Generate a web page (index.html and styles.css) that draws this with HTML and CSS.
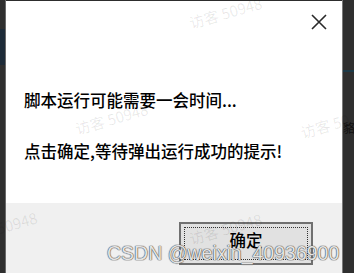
FILE: index.html
```html
<!DOCTYPE html>
<html lang="zh">
<head>
<meta charset="utf-8">
<link rel="stylesheet" href="styles.css">
</head>
<body>
<div class="screen">
  <div class="side side-left">
    <div class="navy-band"></div>
  </div>
  <div class="dialog">
    <div class="content">
      <div class="titlebar">
        <svg class="close" width="16" height="16" viewBox="0 0 16 16">
          <path d="M1 1 L15 15 M15 1 L1 15" stroke="#2a2a2a" stroke-width="1.6" fill="none"/>
        </svg>
      </div>
      <p class="msg msg1">脚本运行可能需要一会时间...</p>
      <p class="msg msg2">点击确定,等待弹出运行成功的提示!</p>
    </div>
    <div class="footer">
      <button class="ok"><span class="focus">确定</span></button>
    </div>
  </div>
  <div class="side side-right">
    <div class="teal-line"></div>
    <span class="cut">貉</span>
  </div>

  <span class="wm wm-top">访客 50948</span>
  <span class="wm wm-mid">访客 50948</span>
  <span class="wm wm-right">访客 50</span>
  <span class="wm wm-left">50948</span>
  <span class="wm wm-btn">访客 50948</span>
  <span class="csdn">CSDN @weixin_40936900</span>
</div>
</body>
</html>
```

FILE: styles.css
```css
html, body {
  margin: 0;
  padding: 0;
}
body {
  width: 354px;
  height: 273px;
  overflow: hidden;
  background: #2d2d2d;
  font-family: "Noto Sans CJK SC", "Noto Sans", sans-serif;
}
.screen {
  position: relative;
  display: flex;
  width: 354px;
  height: 273px;
}
.side {
  background: #2f2f2f;
  position: relative;
}
.side-left {
  width: 5px;
  border-right: 1px solid #6a6a6a;
  padding-top: 29px;
}
.navy-band {
  height: 36px;
  background: #1d2b38;
}
.side-right {
  width: 11px;
  border-left: 1px solid #7a7a7a;
  padding-top: 70px;
}
.teal-line {
  height: 2px;
  background: #1c3a48;
}
.cut {
  position: absolute;
  left: 0;
  top: 121px;
  font-size: 12px;
  line-height: 14px;
  color: #111;
}
.dialog {
  width: 336px;
  margin-top: 1px;
  display: flex;
  flex-direction: column;
}
.content {
  background: #ffffff;
  height: 202px;
  padding-left: 18px;
}
.titlebar {
  display: flex;
  justify-content: flex-end;
  padding-top: 13px;
  padding-right: 15px;
  height: 16px;
}
.close {
  display: block;
}
.msg {
  margin: 0;
  font-size: 16.5px;
  font-weight: 500;
  line-height: 20px;
  color: #000;
  white-space: nowrap;
}
.msg1 {
  margin-top: 60px;
}
.msg2 {
  margin-top: 31px;
}
.footer {
  flex: 1;
  background: #f0f0f0;
  padding-top: 19px;
  padding-left: 173px;
}
.ok {
  width: 134px;
  height: 43px;
  padding: 3px;
  margin: 0;
  background: #e1e1e1;
  border: 2px solid #707070;
  box-sizing: border-box;
  display: flex;
  font-family: "Noto Sans CJK SC", sans-serif;
}
.focus {
  flex: 1;
  border: 1px dotted #333;
  display: flex;
  align-items: center;
  justify-content: center;
  font-size: 16.5px;
  font-weight: 500;
  color: #000;
  padding-bottom: 7px;
}
.wm {
  position: absolute;
  color: rgba(0, 0, 0, 0.09);
  font-family: "Noto Sans CJK SC", sans-serif;
  font-size: 15px;
  transform: rotate(-16deg);
  white-space: nowrap;
  pointer-events: none;
}
.wm-top { left: 188px; top: 2px; }
.wm-mid { left: 74px; top: 108px; }
.wm-right { left: 300px; top: 115px; }
.wm-left { left: -4px; top: 212px; }
.wm-btn { left: 188px; top: 218px; }
.csdn {
  position: absolute;
  left: 107px;
  top: 240px;
  font-family: "Liberation Sans", Arial, sans-serif;
  font-size: 19.5px;
  line-height: 26px;
  color: rgba(255, 255, 255, 0.85);
  text-shadow: 0 0 1px #555, 0 0 1px #555, 0 0 1px #555;
  white-space: nowrap;
}
```
